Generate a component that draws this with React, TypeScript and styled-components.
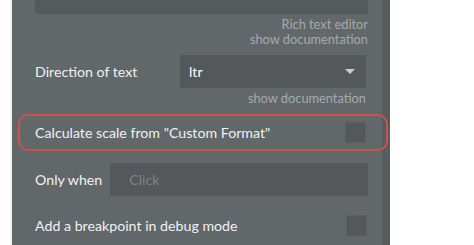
import React from "react";
import styled, { createGlobalStyle } from "styled-components";

const Global = createGlobalStyle`
  html, body { margin: 0; padding: 0; background: #ffffff; overflow: hidden; }
  body { font-family: Lato, "Open Sans", sans-serif; }
`;

const Page = styled.div`
  width: 474px;
  height: 245px;
  overflow: hidden;
  background: #ffffff;
`;

const Panel = styled.div`
  margin-left: 12px;
  margin-top: -30px;
  width: 378px;
  height: 300px;
  display: flex;
  background: #62676a;
  box-shadow: -1px 0 2px rgba(0, 0, 0, 0.08);
`;

const Content = styled.div`
  flex: 1;
  padding: 0 14px 0 23px;
  display: flex;
  flex-direction: column;
`;

const Scrollbar = styled.div`
  width: 8px;
  background: #585c5f;
`;

const TopBox = styled.div`
  height: 44px;
  background: #555a5d;
`;

const DocBlock = styled.div<{ $top: number; $inset?: number }>`
  margin-top: ${(p) => p.$top}px;
  padding-right: ${(p) => p.$inset ?? 0}px;
  display: flex;
  flex-direction: column;
  align-items: flex-end;
  font-size: 12.8px;
  line-height: 15.4px;
  color: #a6aaac;
`;

const Row = styled.div<{ $top: number; $height: number; $highlight?: boolean }>`
  margin-top: ${(p) => p.$top}px;
  height: ${(p) => p.$height}px;
  display: flex;
  align-items: center;
  gap: 8px;
  font-size: 14.2px;
  color: #f1f2f2;
  ${(p) =>
    p.$highlight
      ? `
    position: relative;
    margin-left: -17px;
    margin-right: -20px;
    padding: 0 19px 0 15px;
    border: 2px solid #c8534f;
    border-radius: 10px;
  `
      : ""}
`;

const Label = styled.span<{ $width?: number }>`
  flex: ${(p) => (p.$width ? `0 0 ${p.$width}px` : "1")};
  white-space: nowrap;
`;

const Select = styled.div`
  flex: 0 0 186px;
  margin-left: auto;
  margin-right: 2px;
  height: 33px;
  box-sizing: border-box;
  padding: 0 11px 0 9px;
  background: #54585b;
  display: flex;
  align-items: center;
  justify-content: space-between;
  color: #ffffff;
  font-size: 14.2px;
`;

const Arrow = styled.span`
  width: 0;
  height: 0;
  border-left: 5px solid transparent;
  border-right: 5px solid transparent;
  border-top: 5px solid #c9cbcc;
`;

const Input = styled.div`
  flex: 1;
  height: 33px;
  box-sizing: border-box;
  padding-left: 19px;
  background: #54585b;
  display: flex;
  align-items: center;
  color: #7f8488;
  font-size: 14.2px;
`;

const Checkbox = styled.span`
  flex: 0 0 auto;
  width: 19px;
  height: 19px;
  margin-right: 1px;
  background: #54585b;
  border: 1px solid #5a5e61;
`;

export default function App() {
  return (
    <Page>
      <Global />
      <Panel>
        <Content>
          <TopBox />
          <DocBlock $top={3}>
            <span>Rich text editor</span>
            <span>show documentation</span>
          </DocBlock>
          <Row $top={7} $height={33}>
            <Label>Direction of text</Label>
            <Select>
              <span>ltr</span>
              <Arrow />
            </Select>
          </Row>
          <DocBlock $top={3} $inset={2}>
            <span>show documentation</span>
          </DocBlock>
          <Row $top={8} $height={33} $highlight>
            <Label>Calculate scale from "Custom Format"</Label>
            <Checkbox />
          </Row>
          <Row $top={12} $height={33}>
            <Label $width={65}>Only when</Label>
            <Input>Click</Input>
          </Row>
          <Row $top={13} $height={33}>
            <Label>Add a breakpoint in debug mode</Label>
            <Checkbox />
          </Row>
        </Content>
        <Scrollbar />
      </Panel>
    </Page>
  );
}
